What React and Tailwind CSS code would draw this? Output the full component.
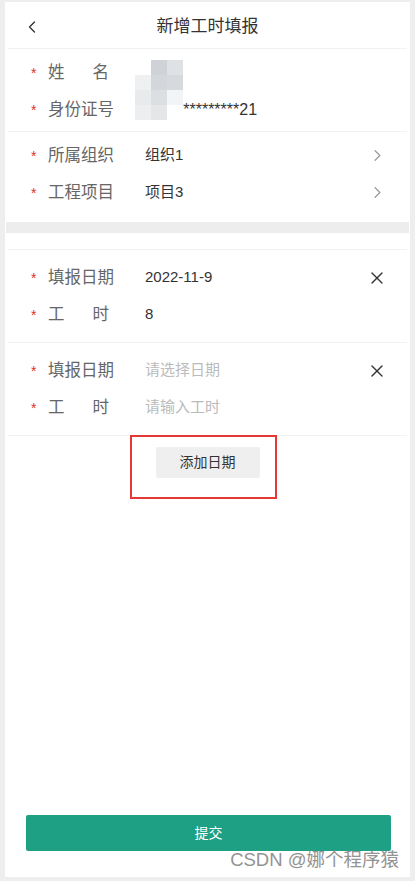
import React from 'react';
import { ChevronLeft, ChevronRight, X } from 'lucide-react';

const font = { fontFamily: '"Liberation Sans", "Noto Sans CJK SC", sans-serif' };

const Label = ({ chars }) => (
  <div className="flex items-center w-[115px] shrink-0">
    <span className="text-[#e0312a] text-[14px] w-[18px] pl-[1px] leading-none">*</span>
    <span
      className={`flex justify-between text-[16.5px] text-[#666] ${
        chars.length > 2 ? 'w-[66px]' : 'w-[61px]'
      }`}
    >
      {chars.map((c, i) => (
        <span key={i}>{c}</span>
      ))}
    </span>
  </div>
);

const Row = ({ label, value, placeholder, right }) => (
  <div className="flex items-center h-[37px] pl-[22px] pr-[20px]">
    <Label chars={label} />
    <div className={`flex-1 text-[15px] ${value ? 'text-[#333]' : 'text-[#bbb]'}`}>
      {value || placeholder}
    </div>
    {right}
  </div>
);

const Mosaic = () => (
  <div className="absolute left-[130px] top-[58px] grid grid-cols-3 w-[48px]">
    <div className="h-[15px] bg-white" />
    <div className="h-[15px] bg-[#cfd3d8]" />
    <div className="h-[15px] bg-[#dfe2e5]" />
    <div className="h-[15px] bg-[#eef0f1]" />
    <div className="h-[15px] bg-[#d3d6da]" />
    <div className="h-[15px] bg-[#d7dadd]" />
    <div className="h-[15px] bg-[#e9eaec]" />
    <div className="h-[15px] bg-[#dcdfe2]" />
    <div className="h-[15px] bg-[#f3f4f5]" />
    <div className="h-[15px] bg-[#eceef0]" />
    <div className="h-[15px] bg-[#e4e6e8]" />
    <div className="h-[15px] bg-white" />
  </div>
);

export default function App() {
  return (
    <div className="bg-[#eeeeee] pt-[2px] pb-[4px] px-[5px] min-h-[881px]" style={font}>
      <div className="relative bg-white h-[875px] flex flex-col">
        <header className="relative h-[47px] pt-[3px] flex items-center justify-center border-b border-[#f2f2f2] mx-[3px]">
          <ChevronLeft size={20} strokeWidth={1.6} className="absolute left-[14px] text-[#333]" />
          <h1 className="text-[17px] text-[#333]">新增工时填报</h1>
        </header>

        <section className="pt-[5px] pb-[3px] border-b border-[#f2f2f2] mx-[3px]">
          <Row label={['姓', '名']} value=" " />
          <Row
            label={['身', '份', '证', '号']}
            value={<span className="pl-[32px] text-[16px]">**********21</span>}
          />
        </section>

        <section className="pt-[5px] pb-[11px] mx-[3px]">
          <Row
            label={['所', '属', '组', '织']}
            value="组织1"
            right={<ChevronRight size={19} strokeWidth={1.5} className="text-[#999]" />}
          />
          <Row
            label={['工', '程', '项', '目']}
            value="项目3"
            right={<ChevronRight size={19} strokeWidth={1.5} className="text-[#999]" />}
          />
        </section>

        <div className="h-[11px] bg-[#ededed] mx-[1px]" />
        <div className="h-[17px] border-b border-[#f2f2f2] mx-[3px]" />

        <section className="py-[9px] border-b border-[#f2f2f2] mx-[3px]">
          <Row
            label={['填', '报', '日', '期']}
            value="2022-11-9"
            right={<X size={20} strokeWidth={1.6} className="text-[#333]" />}
          />
          <Row label={['工', '时']} value="8" />
        </section>

        <section className="py-[9px] border-b border-[#f2f2f2] mx-[3px]">
          <Row
            label={['填', '报', '日', '期']}
            placeholder="请选择日期"
            right={<X size={20} strokeWidth={1.6} className="text-[#333]" />}
          />
          <Row label={['工', '时']} placeholder="请输入工时" />
        </section>

        <div className="flex justify-center pr-[9px]">
          <div className="border-2 border-[#e53935] w-[147px] h-[64px] -mt-[1px] flex items-start pl-[24px] pt-[10px]">
            <button className="w-[104px] h-[31px] bg-[#efefef] rounded-[2px] text-[14px] text-[#333]">
              添加日期
            </button>
          </div>
        </div>

        <div className="flex-1" />

        <div className="pl-[21px] pr-[19px] pb-[26px]">
          <button className="w-full h-[36px] bg-[#1ea085] rounded-[2px] text-white text-[14px]">
            提交
          </button>
        </div>

        <span className="absolute right-[11px] bottom-[3px] text-[18.5px] text-[#888] opacity-90">
          CSDN @娜个程序猿
        </span>

        <Mosaic />
      </div>
    </div>
  );
}
